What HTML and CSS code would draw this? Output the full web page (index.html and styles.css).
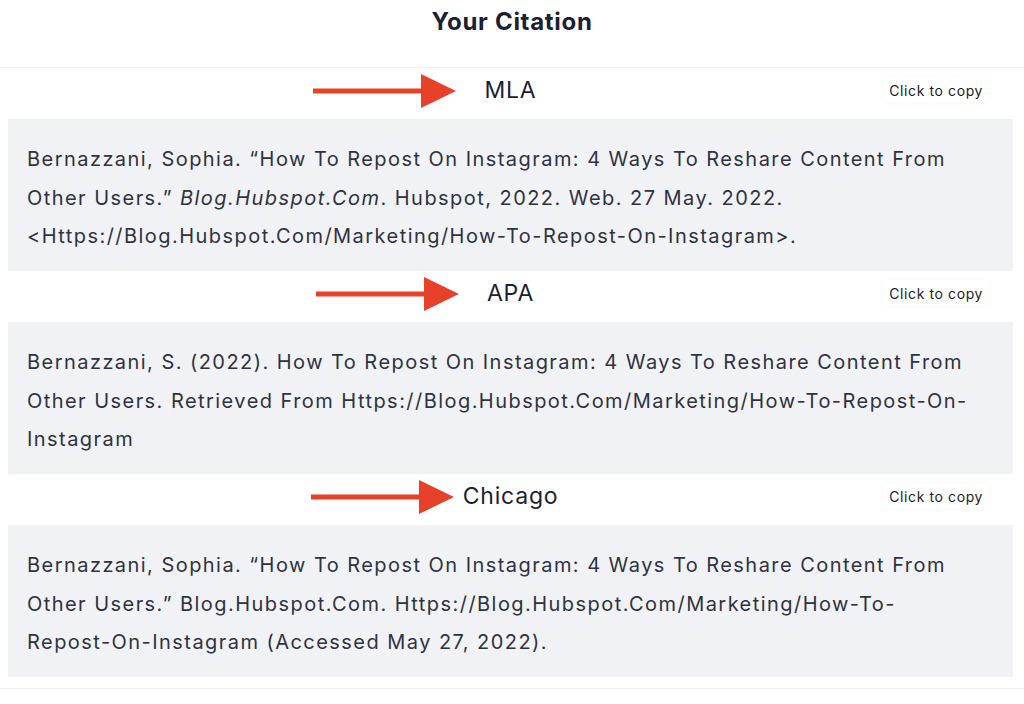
FILE: index.html
```html
<!DOCTYPE html>
<html>
<head>
<meta charset="utf-8">
<link rel="stylesheet" href="styles.css">
</head>
<body>
<div class="page">
  <h1 class="title">Your Citation</h1>
  <div class="list">
    <div class="row">
      <div class="label-wrap">
        <svg class="arrow" width="144" height="36" viewBox="0 0 144 36"><rect x="0" y="15.5" width="112" height="5" fill="#e8412a"/><polygon points="108,1 143,18 108,35" fill="#e8412a"/></svg>
        <span class="label">MLA</span>
      </div>
      <button class="copy">Click to copy</button>
    </div>
    <div class="box">Bernazzani, Sophia. “How To Repost On Instagram: 4 Ways To Reshare Content From Other Users.” <i>Blog.Hubspot.Com</i>. Hubspot, 2022. Web. 27 May. 2022. &lt;Https://Blog.Hubspot.Com/Marketing/How-To-Repost-On-Instagram&gt;.</div>
    <div class="row">
      <div class="label-wrap">
        <svg class="arrow" width="144" height="36" viewBox="0 0 144 36"><rect x="0" y="15.5" width="112" height="5" fill="#e8412a"/><polygon points="108,1 143,18 108,35" fill="#e8412a"/></svg>
        <span class="label">APA</span>
      </div>
      <button class="copy">Click to copy</button>
    </div>
    <div class="box">Bernazzani, S. (2022). How To Repost On Instagram: 4 Ways To Reshare Content From Other Users. Retrieved From Https://Blog.Hubspot.Com/Marketing/How-To-Repost-On-Instagram</div>
    <div class="row">
      <div class="label-wrap">
        <svg class="arrow chicago" width="144" height="36" viewBox="0 0 144 36"><rect x="0" y="15.5" width="112" height="5" fill="#e8412a"/><polygon points="108,1 143,18 108,35" fill="#e8412a"/></svg>
        <span class="label">Chicago</span>
      </div>
      <button class="copy">Click to copy</button>
    </div>
    <div class="box">Bernazzani, Sophia. “How To Repost On Instagram: 4 Ways To Reshare Content From Other Users.” Blog.Hubspot.Com. Https://Blog.Hubspot.Com/Marketing/How-To-<br>Repost-On-Instagram (Accessed May 27, 2022).</div>
  </div>
</div>
</body>
</html>
```
FILE: styles.css
```css
* { box-sizing: border-box; }
html, body { margin: 0; padding: 0; background: #fff; }
body { font-family: Inter, "Noto Sans", sans-serif; color: #2b2e3a; }
.page { width: 1024px; height: 704px; overflow: hidden; }
.title {
  margin: 0;
  height: 67px;
  padding-top: 6px;
  text-align: center;
  font-size: 24px;
  font-weight: 700;
  letter-spacing: 0.7px;
  color: #1c1f33;
  line-height: 32px;
}
.list {
  border-top: 1px solid #eeeff2;
  border-bottom: 1px solid #eeeff2;
  padding: 0 11px 11px 8px;
}
.row {
  height: 51px;
  display: flex;
  align-items: center;
  justify-content: center;
  position: relative;
  padding-bottom: 8px;
}
.label-wrap { position: relative; }
.label {
  font-size: 23px;
  color: #1c1f33;
  font-weight: 400;
  letter-spacing: 0.8px;
}
.arrow {
  position: absolute;
  right: calc(100% + 27px);
  top: 50%;
  margin-top: -17px;
}
.arrow.chicago { right: calc(100% + 8px); }
.copy {
  position: absolute;
  right: 24px;
  top: 50%;
  transform: translateY(-50%);
  margin-top: -4px;
  border: none;
  background: #fff;
  box-shadow: 0 0 4px rgba(0,0,0,0.03);
  border-radius: 4px;
  padding: 4px 6px;
  font-family: Inter, "Noto Sans", sans-serif;
  font-size: 14px;
  letter-spacing: 0.6px;
  color: #1b1b1f;
}
.box {
  background: #f1f2f6;
  padding: 21px 19px 18px 19px;
  font-size: 20px;
  line-height: 38.5px;
  letter-spacing: 1.45px;
  color: #2f3240;
  height: 152px;
}
```
